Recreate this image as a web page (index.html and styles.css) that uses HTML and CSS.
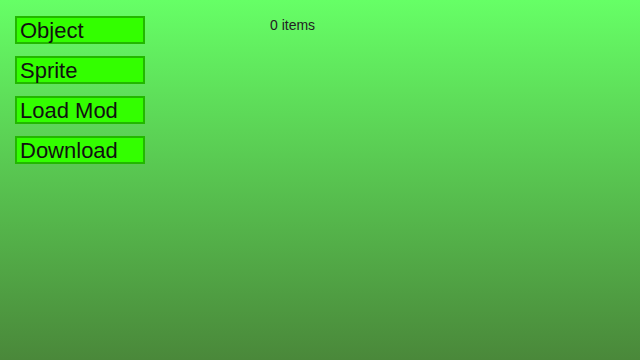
FILE: index.html
```html
<!DOCTYPE html>
<html lang="en">
<head>
    <meta charset="UTF-8">
    <meta name="viewport" content="width=device-width, initial-scale=1.0">
    <title>Mod Loader</title>
    <link rel="stylesheet" href="styles.css">
</head>
<body>
    <div class="layout">
        <div class="menu">
            <button class="menu-btn">Object</button>
            <button class="menu-btn">Sprite</button>
            <button class="menu-btn">Load Mod</button>
            <button class="menu-btn">Download</button>
        </div>
        <div class="count">0 items</div>
    </div>
</body>
</html>
```

FILE: styles.css
```css
html, body {
    height: 100%;
}
body {
    margin: 0;
    font-family: "Liberation Sans", Arial, sans-serif;
    background: linear-gradient(to bottom, #66ff66, #4a883a);
}
.layout {
    display: flex;
    align-items: flex-start;
    gap: 125px;
    padding: 16px 15px;
}
.menu {
    display: flex;
    flex-direction: column;
    gap: 12px;
    width: 130px;
}
.menu-btn {
    box-sizing: border-box;
    width: 130px;
    height: 28px;
    margin: 0;
    padding: 2px 0 0 3px;
    border: 2px solid #22b800;
    background-color: #33ff00;
    color: #111;
    font-family: "Liberation Sans", Arial, sans-serif;
    font-size: 22px;
    line-height: 22px;
    text-align: left;
    cursor: pointer;
}
.count {
    font-size: 14px;
    line-height: 18px;
    color: #222;
}
```
